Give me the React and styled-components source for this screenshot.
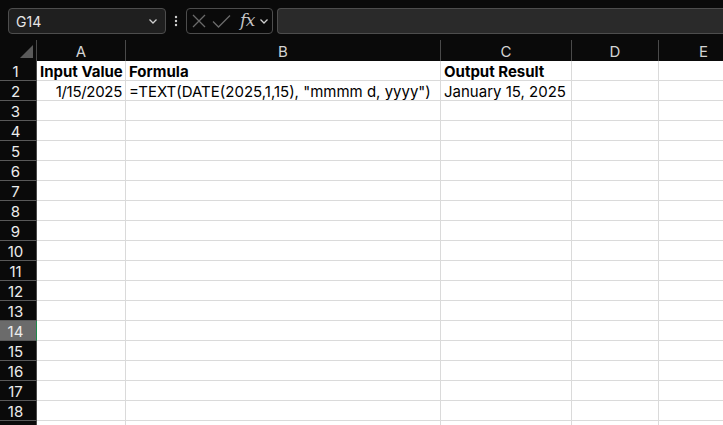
import React from "react";
import styled, { createGlobalStyle } from "styled-components";

const GlobalStyle = createGlobalStyle`
  html, body {
    margin: 0;
    padding: 0;
    background: #0a0a0a;
    font-family: "Inter", "Liberation Sans", sans-serif;
    overflow: hidden;
  }
`;

const COLS = [
  { key: "A", width: 89 },
  { key: "B", width: 315 },
  { key: "C", width: 131 },
  { key: "D", width: 87 },
  { key: "E", width: 90 },
];

const DATA = {
  1: { A: { v: "Input Value", bold: true }, B: { v: "Formula", bold: true }, C: { v: "Output Result", bold: true } },
  2: { A: { v: "1/15/2025", right: true }, B: { v: '=TEXT(DATE(2025,1,15), "mmmm d, yyyy")' }, C: { v: "January 15, 2025" } },
};

const SELECTED_ROW = 14;
const VISIBLE_ROWS = 18;

const Page = styled.div`
  width: 723px;
  height: 425px;
  background: #0a0a0a;
  display: flex;
  flex-direction: column;
  overflow: hidden;
`;

const Toolbar = styled.div`
  height: 40px;
  flex-shrink: 0;
  display: flex;
  align-items: flex-start;
  padding: 8px 0 0 8px;
  box-sizing: border-box;
`;

const NameBox = styled.div`
  width: 158px;
  height: 26px;
  box-sizing: border-box;
  border: 1px solid #4d4d4d;
  border-radius: 4px;
  background: #1f1f1f;
  display: flex;
  align-items: center;
  justify-content: space-between;
  padding: 0 6px 0 7px;
  color: #e6e6e6;
  font-size: 14px;
`;

const Dots = styled.div`
  width: 20px;
  height: 26px;
  display: flex;
  align-items: center;
  justify-content: center;
`;

const FxBox = styled.div`
  width: 87px;
  height: 26px;
  box-sizing: border-box;
  border: 1px solid #4d4d4d;
  border-radius: 4px;
  display: flex;
  align-items: center;
  padding: 0 2px 0 5px;
  gap: 6px;
`;

const FxText = styled.span`
  font-family: "DejaVu Serif", "Liberation Serif", serif;
  font-style: italic;
  font-size: 17px;
  color: #c4c4c4;
  margin-left: 3px;
  margin-right: -3px;
  margin-top: -2px;
  letter-spacing: -0.5px;
`;

const FormulaInput = styled.div`
  flex: 1;
  height: 26px;
  margin-left: 4px;
  box-sizing: border-box;
  border: 1px solid #4d4d4d;
  border-right: none;
  border-radius: 4px 0 0 4px;
  background: #2a2a2a;
`;

const Grid = styled.div`
  flex: 1;
  display: flex;
  flex-direction: column;
  overflow: hidden;
`;

const Row = styled.div`
  display: flex;
  flex-shrink: 0;
  height: ${(p) => p.$h}px;
`;

const Corner = styled.div`
  width: 37px;
  flex-shrink: 0;
  box-sizing: border-box;
  border-right: 1px solid #4a4a4a;
  background: #0a0a0a;
  display: flex;
  align-items: flex-end;
  justify-content: flex-end;
  padding: 0 3px 3px 0;
`;

const ColHead = styled.div`
  width: ${(p) => p.$w}px;
  flex-shrink: 0;
  box-sizing: border-box;
  border-right: 1px solid #4a4a4a;
  background: #0a0a0a;
  color: #d4d4d4;
  font-size: 15px;
  display: flex;
  align-items: center;
  justify-content: center;
  padding-top: 1px;
`;

const RowHead = styled.div`
  width: 37px;
  flex-shrink: 0;
  box-sizing: border-box;
  background: ${(p) => (p.$selected ? "#6b6b6b" : "#0a0a0a")};
  border-bottom: 1px solid #595959;
  border-right: 1px solid ${(p) => (p.$selected ? "#1e8a4c" : "#4a4a4a")};
  color: #ececec;
  font-size: 15px;
  display: flex;
  align-items: center;
  justify-content: center;
  padding: 1px 5px 0 0;
`;

const Cell = styled.div`
  width: ${(p) => p.$w}px;
  flex-shrink: 0;
  box-sizing: border-box;
  background: #ffffff;
  border-right: 1px solid #dadada;
  border-bottom: 1px solid #dadada;
  color: #000;
  font-size: 15px;
  font-weight: ${(p) => (p.$bold ? 700 : 400)};
  letter-spacing: ${(p) => (p.$right ? "-0.3px" : "0")};
  display: flex;
  align-items: center;
  justify-content: ${(p) => (p.$right ? "flex-end" : "flex-start")};
  padding: 1px 3px 0 3px;
  white-space: nowrap;
  overflow: hidden;
`;

const Chevron = () => (
  <svg width="12" height="12" viewBox="0 0 12 12">
    <path d="M2.5 4.5 L6 8 L9.5 4.5" fill="none" stroke="#cfcfcf" strokeWidth="1.3" />
  </svg>
);

const App = () => {
  const rows = Array.from({ length: VISIBLE_ROWS + 1 }, (_, i) => i + 1);
  return (
    <Page>
      <GlobalStyle />
      <Toolbar>
        <NameBox>
          <span>G14</span>
          <Chevron />
        </NameBox>
        <Dots>
          <svg width="4" height="12" viewBox="0 0 4 12">
            <circle cx="2" cy="2" r="1.2" fill="#cfcfcf" />
            <circle cx="2" cy="6" r="1.2" fill="#cfcfcf" />
            <circle cx="2" cy="10" r="1.2" fill="#cfcfcf" />
          </svg>
        </Dots>
        <FxBox>
          <svg width="14" height="14" viewBox="0 0 14 14">
            <path d="M1 1 L13 13 M13 1 L1 13" stroke="#6a6a6a" strokeWidth="1.3" fill="none" />
          </svg>
          <svg width="19" height="15" viewBox="0 0 19 15">
            <path d="M1 7.5 L6.5 13 L18 1.5" stroke="#6a6a6a" strokeWidth="1.3" fill="none" />
          </svg>
          <FxText>fx</FxText>
          <Chevron />
        </FxBox>
        <FormulaInput />
      </Toolbar>
      <Grid>
        <Row $h={21}>
          <Corner>
            <svg width="13" height="13" viewBox="0 0 13 13">
              <path d="M13 0 L13 13 L0 13 Z" fill="#5a5a5a" />
            </svg>
          </Corner>
          {COLS.map((c) => (
            <ColHead key={c.key} $w={c.width}>
              {c.key}
            </ColHead>
          ))}
        </Row>
        {rows.map((r) => (
          <Row key={r} $h={20}>
            <RowHead $selected={r === SELECTED_ROW}>{r <= VISIBLE_ROWS ? r : ""}</RowHead>
            {COLS.map((c) => {
              const d = (DATA[r] && DATA[r][c.key]) || {};
              return (
                <Cell key={c.key} $w={c.width} $bold={d.bold} $right={d.right}>
                  {d.v}
                </Cell>
              );
            })}
          </Row>
        ))}
      </Grid>
    </Page>
  );
};

export default App;
